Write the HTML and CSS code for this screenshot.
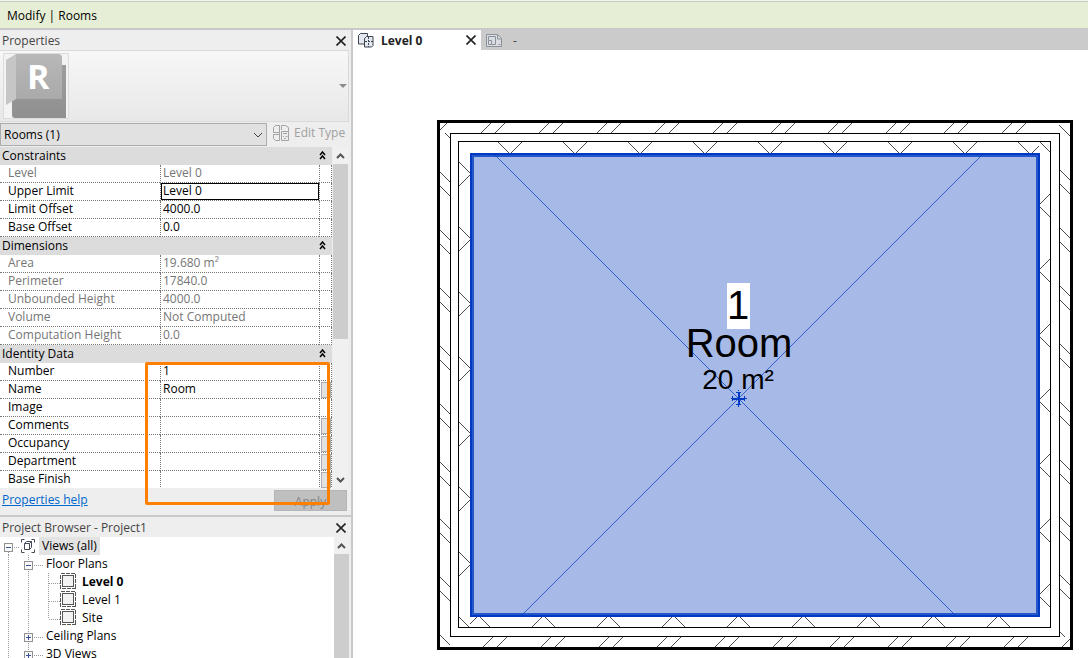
FILE: index.html
```html
<!DOCTYPE html>
<html lang="en">
<head>
<meta charset="utf-8">
<title>Project1 - Floor Plan: Level 0</title>
<link rel="stylesheet" href="styles.css">
</head>
<body>
<header class="ribbon">Modify | Rooms</header>
<div class="workspace">
  <aside class="docks">
    <section class="panel properties">
      <div class="panel-title"><h2>Properties</h2>
        <button class="close" aria-label="Close Properties"><svg width="10" height="10" viewBox="0 0 10 10"><path d="M.5 .5l9 9M9.500 .5l-9 9"/></svg></button>
      </div>
      <button class="type-selector" aria-label="Type selector">
        <svg class="logo" width="66" height="66" viewBox="0 0 66 66">
          <defs>
            <linearGradient id="face" x1="0" y1="0" x2="0" y2="1"><stop offset="0" stop-color="#b8b8b8"/><stop offset="1" stop-color="#aaa"/></linearGradient>
            <linearGradient id="back" x1="0" y1="0" x2="0" y2="1"><stop offset="0" stop-color="#9d9d9d"/><stop offset="1" stop-color="#909090"/></linearGradient>
          </defs>
          <rect x=".5" y=".5" width="65" height="65" fill="#f3f3f3" stroke="#dcdcdc"/>
          <path d="M9 12h54v53H12q-3 0-3-3z" fill="url(#back)"/>
          <path d="M3 7L13 1v45L3 52z" fill="#c6c6c6"/>
          <path d="M13 1h42q4 0 4 4v41H13z" fill="url(#face)"/>
          <text x="24" y="36" class="logo-letter">R</text>
        </svg>
        <svg class="drop" width="8" height="4" viewBox="0 0 8 4"><path d="M0 0h8L4 4z" fill="#8c8c8c"/></svg>
      </button>
      <div class="filter">
        <select class="filter-select" aria-label="Element filter"><option>Rooms (1)</option></select>
        <button class="edit-type" disabled>
          <svg width="17" height="17" viewBox="0 0 17 17" fill="none" stroke="#a3a3a3"><path d="M6.500 .5h-4l-2 2v5h6zM8.500 5V.5h4l3 2V6M.5 9.500h6v6h-4l-2-2zM6.500 7.500v2M8.500 6.500h7v9h-7zM10 8.500h4M10 11.500h1M12.500 11.500h2M11 13.500h2"/></svg>
          Edit Type</button>
      </div>
      <div class="grid-area">
        <table class="grid">
          <colgroup><col class="c-name"><col><col class="c-more"></colgroup>
          <tbody>
            <tr class="group"><th colspan="2">Constraints</th><td><svg class="fold" width="7" height="9" viewBox="0 0 7 9"><path d="M1 4l2.500-3L6 4M1 8l2.500-3L6 8"/></svg></td></tr>
            <tr class="ro"><th>Level</th><td>Level 0</td><td></td></tr>
            <tr><th><label for="upper">Upper Limit</label></th><td><input id="upper" class="active" value="Level 0"></td><td></td></tr>
            <tr><th><label for="limit">Limit Offset</label></th><td><input id="limit" value="4000.0"></td><td></td></tr>
            <tr><th><label for="base">Base Offset</label></th><td><input id="base" value="0.0"></td><td></td></tr>
          </tbody>
          <tbody>
            <tr class="group"><th colspan="2">Dimensions</th><td><svg class="fold" width="7" height="9" viewBox="0 0 7 9"><path d="M1 4l2.500-3L6 4M1 8l2.500-3L6 8"/></svg></td></tr>
            <tr class="ro"><th>Area</th><td>19.680 m²</td><td></td></tr>
            <tr class="ro"><th>Perimeter</th><td>17840.0</td><td></td></tr>
            <tr class="ro"><th>Unbounded Height</th><td>4000.0</td><td></td></tr>
            <tr class="ro"><th>Volume</th><td>Not Computed</td><td></td></tr>
            <tr class="ro"><th>Computation Height</th><td>0.0</td><td></td></tr>
          </tbody>
          <tbody>
            <tr class="group"><th colspan="2">Identity Data</th><td><svg class="fold" width="7" height="9" viewBox="0 0 7 9"><path d="M1 4l2.500-3L6 4M1 8l2.500-3L6 8"/></svg></td></tr>
            <tr><th><label for="num">Number</label></th><td><input id="num" value="1"></td><td></td></tr>
            <tr><th><label for="name">Name</label></th><td><input id="name" value="Room"></td><td><button class="more" aria-label="Browse Name"></button></td></tr>
            <tr><th><label for="image">Image</label></th><td><input id="image"></td><td></td></tr>
            <tr><th><label for="comments">Comments</label></th><td><input id="comments"></td><td><button class="more" aria-label="Browse Comments"></button></td></tr>
            <tr><th><label for="occ">Occupancy</label></th><td><input id="occ"></td><td><button class="more" aria-label="Browse Occupancy"></button></td></tr>
            <tr><th><label for="dept">Department</label></th><td><input id="dept"></td><td><button class="more" aria-label="Browse Department"></button></td></tr>
            <tr><th><label for="finish">Base Finish</label></th><td><input id="finish"></td><td><button class="more" aria-label="Browse Base Finish"></button></td></tr>
          </tbody>
        </table>
        <div class="scroll">
          <button aria-label="Scroll up"><svg width="9" height="6" viewBox="0 0 9 6"><path d="M1 5l3.500-3.500L8 5"/></svg></button>
          <div class="thumb"></div>
          <button class="down" aria-label="Scroll down"><svg width="9" height="6" viewBox="0 0 9 6"><path d="M1 1l3.500 3.500L8 1"/></svg></button>
        </div>
      </div>
      <div class="panel-foot"><a href="#help">Properties help</a><button class="apply" disabled>Apply</button></div>
      <div class="highlight"></div>
    </section>
    <section class="panel browser">
      <div class="panel-title"><h2>Project Browser - Project1</h2>
        <button class="close" aria-label="Close Project Browser"><svg width="10" height="10" viewBox="0 0 10 10"><path d="M.5 .5l9 9M9.500 .5l-9 9"/></svg></button>
      </div>
      <div class="tree-area">
        <ul class="tree">
          <li><svg class="guide" width="39" height="18" viewBox="0 0 39 18"><path class="dots" d="M8.500 15v3M14 10.500h6"/><rect class="knob" x="4.500" y="6.500" width="8" height="8"/><path class="sign" d="M6 10.500h5"/><path class="corners" d="M24.500 2.500h-3v3M31.500 2.500h3v3M21.500 12.500v3h3M34.500 12.500v3h-3"/><path class="cube" d="M24.500 6.500l2-2h5v6l-2 2h-5zM24.500 6.500h5v6M29.500 6.500l2-2"/></svg><span class="selected">Views (all)</span></li>
          <li><svg class="guide" width="46" height="18" viewBox="0 0 46 18"><path class="dots" d="M8.500 0v18M28.500 0v6M28.500 16v2M34 10.500h10"/><rect class="knob" x="24.500" y="6.500" width="8" height="8"/><path class="sign" d="M26 10.500h5"/></svg><span>Floor Plans</span></li>
          <li><svg class="guide" width="82" height="18" viewBox="0 0 82 18"><path class="dots" d="M8.500 0v18M28.500 0v18M48.500 0v18M49 10.500h11"/><rect class="crop" x="60.500" y=".5" width="15" height="15"/><rect class="sheet" x="62.500" y="2.500" width="11" height="11"/></svg><b>Level 0</b></li>
          <li><svg class="guide" width="82" height="18" viewBox="0 0 82 18"><path class="dots" d="M8.500 0v18M28.500 0v18M48.500 0v18M49 10.500h11"/><rect class="crop" x="60.500" y=".5" width="15" height="15"/><rect class="sheet" x="62.500" y="2.500" width="11" height="11"/></svg><span>Level 1</span></li>
          <li><svg class="guide" width="82" height="18" viewBox="0 0 82 18"><path class="dots" d="M8.500 0v18M28.500 0v18M48.500 0v10M49 10.500h11"/><rect class="crop" x="60.500" y=".5" width="15" height="15"/><rect class="sheet" x="62.500" y="2.500" width="11" height="11"/></svg><span>Site</span></li>
          <li><svg class="guide" width="46" height="18" viewBox="0 0 46 18"><path class="dots" d="M8.500 0v18M28.500 0v6M28.500 16v2M34 10.500h10"/><rect class="knob" x="24.500" y="6.500" width="8" height="8"/><path class="sign" d="M26 10.500h5M28.500 8v5"/></svg><span>Ceiling Plans</span></li>
          <li><svg class="guide" width="46" height="18" viewBox="0 0 46 18"><path class="dots" d="M8.500 0v18M28.500 0v6M28.500 16v2M34 10.500h10"/><rect class="knob" x="24.500" y="6.500" width="8" height="8"/><path class="sign" d="M26 10.500h5M28.500 8v5"/></svg><span>3D Views</span></li>
        </ul>
        <div class="scroll">
          <button aria-label="Scroll up"><svg width="9" height="6" viewBox="0 0 9 6"><path d="M1 5l3.500-3.500L8 5"/></svg></button>
          <div class="thumb fill"></div>
        </div>
      </div>
    </section>
  </aside>
  <main class="view">
    <nav class="tabs">
      <div class="tab current">
        <svg width="16" height="15" viewBox="0 0 16 15"><path d="M.5 2.500l2-2h7v3h5.500v9l-1.500 1.500H6.500v-3h-6z" fill="#e4e8ef" stroke="#3f4652"/><path d="M6.500 11V5.500l2-2h2" fill="none" stroke="#3f4652"/><path d="M10.500 4v10M7 8.500h9" fill="none" stroke="#3f4652" stroke-dasharray="2 1"/></svg>
        <a href="#level0">Level 0</a>
        <button class="close" aria-label="Close Level 0"><svg width="10" height="10" viewBox="0 0 10 10"><path d="M.5 .5l9 9M9.500 .5l-9 9"/></svg></button>
      </div>
      <div class="tab">
        <svg width="16" height="13" viewBox="0 0 16 13"><path d="M.5 .5h11l4 4v8H.5z" fill="#d9dce0" stroke="#8d929a"/><path d="M2.500 10.500v-4h3v4zM2.500 6.500v-4h7v8h-4M11.500 1v4h4M12.500 10.500h2" fill="none" stroke="#8d929a"/></svg>
        <a href="#sheet">-</a>
      </div>
    </nav>
    <svg class="plan" viewBox="353 50 735 608" preserveAspectRatio="xMidYMid meet" role="img" aria-label="Floor plan of Level 0">
      <rect x="472" y="155" width="566" height="460" fill="#a6b9e7"/>
      <rect x="473" y="156" width="564" height="458" fill="none" stroke="#2457c9" stroke-width="2"/>
      <rect x="471" y="154" width="568" height="462" fill="none" stroke="#0039c2" stroke-width="2"/>
      <g class="room-lines"><path d="M495 155l460 460M982 155L522 615"/></g>
      <g fill="none" stroke="#000">
        <rect x="438.500" y="121.500" width="633" height="527" stroke-width="3" stroke-linejoin="round"/>
        <rect x="450.500" y="133.500" width="609" height="503"/>
        <rect x="458.500" y="141.500" width="592" height="486"/>
      </g>
      <g id="hatch" class="hatch"></g>
      <rect x="727" y="283" width="23" height="46" fill="#fff"/>
      <g class="tag" text-anchor="middle">
        <text x="738" y="319" font-size="40">1</text>
        <text x="739" y="357" font-size="40">Room</text>
        <text x="738" y="389" font-size="28">20 m²</text>
      </g>
      <path d="M738.500 392v13M732 398.500h13" stroke="#0039c2" stroke-width="2"/>
      <path d="M738.500 391v-1M736 392.500h5M736 404.500h5M738.500 405v2M732.500 396v5M731 398.500h1M744.500 396v5M745 398.500h2" stroke="#0039c2"/>
    </svg>
  </main>
</div>
<script src="plan.js"></script>
</body>
</html>
```
FILE: styles.css
```css
* { box-sizing: border-box; }
body {
  margin: 0;
  height: 100vh;
  display: flex;
  flex-direction: column;
  overflow: hidden;
  background: #fff;
  color: #000;
  font: 12px/18px "Open Sans", "Noto Sans", sans-serif;
}
button, input, select { font: inherit; color: inherit; }
button { padding: 0; border: 0; background: none; }
h2 { margin: 0; font: inherit; }

.ribbon {
  flex: none;
  height: 30px;
  padding: 6px 7px 0;
  background: #e6efd6;
  border-top: 1px solid #f2f2f2;
  border-bottom: 2px solid #c9c9cb;
  box-shadow: inset 0 1px #c6cbc0;
}
.workspace { flex: 1; display: flex; min-height: 0; }

.docks {
  flex: none;
  width: 353px;
  display: flex;
  flex-direction: column;
  background: #eee;
  border-right: 2px solid #c9c9c9;
}
.panel-title {
  display: flex;
  align-items: center;
  justify-content: space-between;
  height: 20px;
  padding: 2px 5px 0 2px;
  color: #444;
}
.close { display: flex; }
.close path { stroke: #222; stroke-width: 1.6; fill: none; }

.properties { position: relative; border-bottom: 2px solid #c9c9c9; }
.type-selector {
  display: flex;
  align-items: center;
  justify-content: space-between;
  width: 349px;
  height: 72px;
  padding: 1px 1px 1px 3px;
  border: 1px solid #dadada;
  border-left: 0;
  background: linear-gradient(#f7f7f7, #e8e8e8);
}
.logo-letter { font: bold 34px "Open Sans", sans-serif; fill: #fff; }
.filter { display: flex; align-items: center; height: 25px; gap: 6px; }
.filter-select {
  width: 267px;
  height: 23px;
  padding: 0 3px;
  border: 1px solid #adadad;
  appearance: none;
  background: #e1e1e1 url("data:image/svg+xml,%3Csvg xmlns='http://www.w3.org/2000/svg' width='10' height='6'%3E%3Cpath d='M1 1l4 4 4-4' fill='none' stroke='%23444'/%3E%3C/svg%3E") no-repeat right 3px center;
}
.edit-type { display: flex; align-items: center; gap: 4px; color: #a0a0a0; padding-bottom: 3px; }

.grid-area { display: flex; height: 341px; overflow: hidden; }
.grid {
  flex: none;
  width: 332px;
  height: 342px;
  table-layout: fixed;
  border-collapse: separate;
  border-spacing: 0;
  background: #fff;
}
.c-name { width: 160px; }
.c-more { width: 13px; }
.grid tr { height: 18px; }
.grid th, .grid td {
  height: 18px;
  padding: 0;
  line-height: 16px;
  text-align: left;
  font-weight: normal;
  vertical-align: top;
  border-bottom: 1px dotted #777;
}
.grid th { padding-left: 8px; }
.grid td { border-left: 1px dotted #777; padding-left: 2px; }
.grid td:has(input), .grid td:last-child { padding-left: 0; }
.grid td:last-child { border-right: 1px dotted #777; }
.grid .group th, .grid .group td { background: #dcdcdc; border: 0; line-height: 18px; }
.grid .group th { padding-left: 2px; }
.ro { color: #767676; }
.grid input {
  display: block;
  width: 100%;
  height: 16px;
  padding: 0 2px;
  border: 0;
  background: none;
  outline: none;
}
.grid .active { height: 17px; padding: 0 1px 2px; border: 1px solid #000; }
.fold { display: block; margin: 4px 0 0; }
.fold path { fill: none; stroke: #000; stroke-width: 1.5; }
.more { display: block; width: 10px; height: 16px; margin: 1px 0 0 1px; background: #e1e1e1; border: 1px solid #adadad; }

.scroll { display: flex; flex-direction: column; width: 15px; margin-left: 1px; background: #f0f0f0; }
.scroll button { flex: none; height: 17px; display: grid; place-items: center; }
.scroll path { fill: none; stroke: #555; stroke-width: 2; }
.thumb { height: 175px; background: #cdcdcd; }
.thumb.fill { height: auto; flex: 1; }
.down { margin-top: auto; }

.panel-foot { display: flex; justify-content: space-between; height: 27px; padding: 2px 4px 4px 2px; }
.panel-foot a { color: #0066cc; padding-top: 1px; }
.apply { width: 73px; height: 21px; background: #bfbfbf; border: 1px solid #b5b5b5; color: #838383; padding-top: 2px; }
.highlight {
  position: absolute;
  left: 145px;
  top: 332px;
  width: 185px;
  height: 143px;
  border: 3px solid #ff8000;
  border-radius: 2px;
  pointer-events: none;
}

.browser { flex: 1; min-height: 0; display: flex; flex-direction: column; }
.browser .panel-title { flex: none; }
.tree-area { flex: 1; min-height: 0; display: flex; padding-right: 2px; }
.tree { flex: 1; margin: 0; padding: 0; list-style: none; background: #fff; overflow: hidden; }
.tree li { display: flex; height: 18px; white-space: nowrap; }
.tree-area .scroll { margin: 0; }
.guide { flex: none; shape-rendering: crispEdges; fill: none; }
.selected { background: #e3e3e3; padding: 0 3px; }
.dots { stroke: #999; stroke-dasharray: 1 1; }
.knob { fill: #fafafa; stroke: #919191; }
.sign { stroke: #3b4f9b; }
.corners, .cube { stroke: #444b57; shape-rendering: auto; }
.crop { stroke: #555; stroke-dasharray: 4 1; }
.sheet { fill: #f2f2f2; stroke: #555; }

.view { flex: 1; min-width: 0; display: flex; flex-direction: column; }
.tabs { flex: none; display: flex; height: 20px; background: #cbcbcb; }
.tab { display: flex; align-items: center; padding: 0 5px; gap: 11px; color: #444; }
.tab a { color: inherit; text-decoration: none; padding-top: 2px; }
.tab.current { width: 128px; gap: 7px; background: #fff; font-weight: bold; color: #222; }
.tab .close { margin-left: auto; }
.plan { flex: 1; min-height: 0; width: 100%; shape-rendering: crispEdges; }
.room-lines { stroke: #0039c2; stroke-width: .7; }
.hatch { fill: none; stroke: #000; stroke-width: .7; }
.tag { font-family: "Liberation Sans", Arial, sans-serif; }
```
FILE: plan.js
```js
// Wall hatching: brick strokes in the outer layer, insulation chevrons in the inner one.
const strokes = [];
const series = (start, step, count, draw) => {
  for (let i = 0; i < count; i++) strokes.push(draw(Math.round(start + i * step)));
};

series(481, 57.9, 10, x => `M${x} 133l10-10M${x + 14} 133l10-10`);
series(483, 57.9, 10, x => `M${x} 647l10-10M${x + 14} 647l10-10`);
series(172, 57.9, 8, y => `M440 ${y}l10 10M440 ${y + 14}l10 10`);
series(170, 57.9, 8, y => `M1060 ${y}l10 10M1060 ${y + 14}l10 10`);

series(510, 65, 8, x => `M${x - 12} 142l11 11M${x + 12} 142l-11 11`);
series(543, 65, 8, x => `M${x - 11} 627l10-10M${x + 12} 627l-10-10`);
series(174, 65, 7, y => `M459 ${y - 12}l11 11M459 ${y + 12}l11-11`);
series(205, 65, 7, y => `M1050 ${y - 11}l-10 10M1050 ${y + 12}l-10-10`);

// Corner pieces
strokes.push("M440 130l7-7M445 133l5 5M1059 125l11 11M440 635l10 10M1062 647l8-8M1060 632l5 5");
strokes.push("M1018 142l11 11M1032 153l7-7M1040 142l10 10M459 617l10 10M470 624l7-7M490 627l-10-10");

const path = document.createElementNS("http://www.w3.org/2000/svg", "path");
path.setAttribute("d", strokes.join(""));
document.getElementById("hatch").append(path);
```
